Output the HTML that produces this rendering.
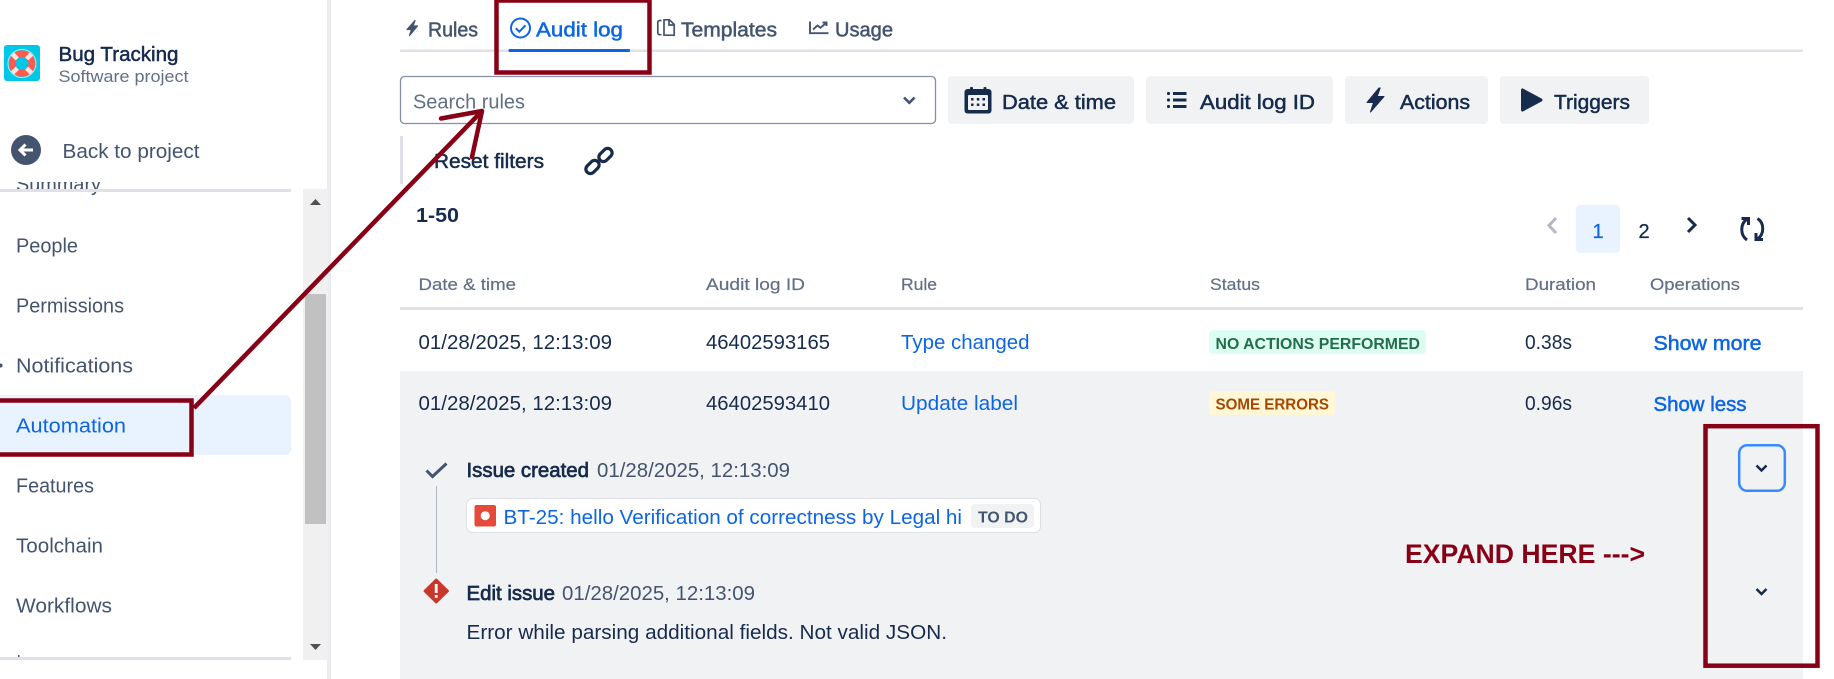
<!DOCTYPE html>
<html lang="en">
<head>
<meta charset="utf-8">
<title>Audit log</title>
<style>
html,body{margin:0;padding:0;background:#fff;width:1834px;height:679px;overflow:hidden}
svg{display:block}
text{font-family:"Liberation Sans",Arial,sans-serif;font-size:20px;white-space:pre}
.nav{fill:#44546f}
.d{fill:#172b4d}
.b{fill:#0c66e4}
.g{fill:#44546f}
.th{fill:#626f86;font-size:17px;stroke:#626f86;stroke-width:.2px}
.m{stroke-width:.5px;stroke:currentColor}
.s{stroke-width:.3px;stroke:currentColor}
</style>
</head>
<body>
<svg xmlns="http://www.w3.org/2000/svg" width="1834" height="679" viewBox="0 0 1834 679">
<defs><clipPath id="sc"><rect x="0" y="182" width="300" height="16"/></clipPath></defs>
<rect width="1834" height="679" fill="#fff"/>

<!-- sidebar -->
<rect x="327" y="0" width="4" height="679" fill="#ebecf0"/>
<rect x="4" y="45" width="36" height="36" rx="3" fill="#00c7e6"/>
<circle cx="22" cy="63.5" r="14" fill="none" stroke="#a8eef7" stroke-width="1"/>
<circle cx="22" cy="63.5" r="9.8" fill="none" stroke="#ff5a4f" stroke-width="6.6"/>
<g stroke="#ffe4df" stroke-width="4.5">
<path d="M26.7 58.8L31.4 54.1M17.3 58.8L12.6 54.1M26.7 68.2L31.4 72.9M17.3 68.2L12.6 72.9"/>
</g>
<text x="58.500" y="61" textLength="120" lengthAdjust="spacingAndGlyphs" class="d m" color="#172b4d">Bug Tracking</text>
<text x="58.500" y="82" textLength="130" lengthAdjust="spacingAndGlyphs" style="font-size:17px;fill:#626f86">Software project</text>
<circle cx="26" cy="150" r="15" fill="#44546f"/>
<path d="M33 150H20M25.5 144.5L20 150L25.5 155.5" fill="none" stroke="#fff" stroke-width="3"/>
<text x="62.500" y="158" textLength="137" lengthAdjust="spacingAndGlyphs" class="nav">Back to project</text>

<text x="16" y="191" textLength="85" lengthAdjust="spacingAndGlyphs" class="nav" clip-path="url(#sc)">Summary</text>
<rect x="0" y="189" width="291" height="3" fill="#dfe1e6"/>
<text x="16" y="252.500" textLength="62" lengthAdjust="spacingAndGlyphs" class="nav">People</text>
<text x="16" y="312.500" textLength="108" lengthAdjust="spacingAndGlyphs" class="nav">Permissions</text>
<circle cx="0.5" cy="365.5" r="2" fill="#44546f"/>
<text x="16" y="372.500" textLength="117" lengthAdjust="spacingAndGlyphs" class="nav">Notifications</text>
<rect x="-8" y="395" width="299" height="60" rx="6" fill="#e9f2ff"/>
<text x="16" y="432.500" textLength="110" lengthAdjust="spacingAndGlyphs" class="b">Automation</text>
<text x="16" y="492.500" textLength="78" lengthAdjust="spacingAndGlyphs" class="nav">Features</text>
<text x="16" y="552.500" textLength="87" lengthAdjust="spacingAndGlyphs" class="nav">Toolchain</text>
<text x="16" y="612.500" textLength="96" lengthAdjust="spacingAndGlyphs" class="nav">Workflows</text>
<rect x="18" y="655" width="1.5" height="2" fill="#44546f"/>
<rect x="0" y="657" width="291" height="3" fill="#dfe1e6"/>

<!-- scrollbar -->
<rect x="303" y="189" width="25" height="471" fill="#f0f0f0"/>
<rect x="305" y="294" width="21" height="230" fill="#c1c1c1"/>
<path d="M310 205L315.500 199L321 205Z" fill="#505050"/>
<path d="M310 644L315.500 650L321 644Z" fill="#505050"/>

<!-- tabs -->
<rect x="400" y="49.500" width="1403" height="2.500" fill="#dfe1e6"/>
<rect x="508.500" y="49" width="121.500" height="3" rx="1" fill="#0c66e4"/>
<path d="M415 20.500L407 29.500H411.500L409.500 35.500L417.500 26H413Z" fill="#44546f" stroke="#44546f" stroke-width="1.200" stroke-linejoin="round"/>
<text x="428" y="36.500" textLength="50" lengthAdjust="spacingAndGlyphs" class="g m" color="#44546f">Rules</text>
<circle cx="520.500" cy="28" r="9.500" fill="none" stroke="#0c66e4" stroke-width="2"/>
<path d="M515.800 28.200L519.300 31.700L525.500 25.300" fill="none" stroke="#0c66e4" stroke-width="2"/>
<text x="536" y="36.500" textLength="87" lengthAdjust="spacingAndGlyphs" class="b m" color="#0c66e4">Audit log</text>
<path d="M664 19.800H669.500L674.200 24.500V35.200H664ZM669 20V25H674" fill="none" stroke="#44546f" stroke-width="1.700"/>
<path d="M661.500 20.500H660Q657.800 20.500 657.800 22.700V32.500Q657.800 34.700 660 34.700H661.500" fill="none" stroke="#44546f" stroke-width="1.700"/>
<text x="681" y="36.500" textLength="96" lengthAdjust="spacingAndGlyphs" class="g m" color="#44546f">Templates</text>
<path d="M810 21.500V33.200H828.500" fill="none" stroke="#44546f" stroke-width="1.900"/>
<path d="M813 29.500L817.500 25.500L820.500 27.800L826 23M822.500 22.500H826.500V26" fill="none" stroke="#44546f" stroke-width="1.900"/>
<text x="835" y="36.500" textLength="58" lengthAdjust="spacingAndGlyphs" class="g m" color="#44546f">Usage</text>

<!-- search -->
<rect x="400.500" y="76.500" width="535" height="47" rx="4" fill="#fff" stroke="#8590a2" stroke-width="1.300"/>
<text x="413" y="108.500" textLength="112" lengthAdjust="spacingAndGlyphs" style="fill:#626f86">Search rules</text>
<path d="M904 97.500L909.300 102.800L914.600 97.500" fill="none" stroke="#44546f" stroke-width="2.600"/>

<!-- filter buttons -->
<rect x="948" y="76" width="186" height="48" rx="4" fill="#f1f2f4"/>
<rect x="1146" y="76" width="187" height="48" rx="4" fill="#f1f2f4"/>
<rect x="1345" y="76" width="143" height="48" rx="4" fill="#f1f2f4"/>
<rect x="1500" y="76" width="149" height="48" rx="4" fill="#f1f2f4"/>
<rect x="964.500" y="89" width="27" height="24.500" rx="3" fill="#172b4d"/>
<rect x="970" y="87" width="3" height="5" rx="1" fill="#172b4d"/>
<rect x="983.500" y="87" width="3" height="5" rx="1" fill="#172b4d"/>
<rect x="968" y="95" width="20" height="15" rx="1" fill="#f1f2f4"/>
<g fill="#172b4d"><rect x="971" y="98" width="2.500" height="2.500"/><rect x="976.800" y="98" width="2.500" height="2.500"/><rect x="982.500" y="98" width="2.500" height="2.500"/><rect x="971" y="103.500" width="2.500" height="2.500"/><rect x="976.800" y="103.500" width="2.500" height="2.500"/><rect x="982.500" y="103.500" width="2.500" height="2.500"/></g>
<text x="1002" y="109" textLength="114" lengthAdjust="spacingAndGlyphs" class="d m" color="#172b4d">Date &amp; time</text>
<g fill="#172b4d"><rect x="1167" y="92" width="3" height="3" rx="1"/><rect x="1167" y="98.500" width="3" height="3" rx="1"/><rect x="1167" y="105" width="3" height="3" rx="1"/><rect x="1173" y="92" width="13.500" height="3"/><rect x="1173" y="98.500" width="13.500" height="3"/><rect x="1173" y="105" width="13.500" height="3"/></g>
<text x="1200" y="109" textLength="115" lengthAdjust="spacingAndGlyphs" class="d m" color="#172b4d">Audit log ID</text>
<path d="M1379 88L1367 102.500H1373.500L1370.500 112L1384 96.500H1377.200L1380.200 88Z" fill="#172b4d" stroke="#172b4d" stroke-width="1" stroke-linejoin="round"/>
<text x="1400" y="109" textLength="70" lengthAdjust="spacingAndGlyphs" class="d m" color="#172b4d">Actions</text>
<path d="M1522.500 90V110L1541 100Z" fill="#172b4d" stroke="#172b4d" stroke-width="3" stroke-linejoin="round"/>
<text x="1554" y="109" textLength="76" lengthAdjust="spacingAndGlyphs" class="d m" color="#172b4d">Triggers</text>

<!-- reset -->
<rect x="400" y="136" width="3" height="48" fill="#dfe1e6"/>
<text x="434" y="168" textLength="110" lengthAdjust="spacingAndGlyphs" class="d m" color="#172b4d">Reset filters</text>
<g fill="none" stroke="#172b4d" stroke-width="3.200">
<rect x="585" y="162.500" width="15" height="9" rx="4.500" transform="rotate(-45 592.500 167)"/>
<rect x="598" y="150.500" width="15" height="9" rx="4.500" transform="rotate(-45 605.500 155)"/>
</g>
<text x="416" y="222" textLength="43" lengthAdjust="spacingAndGlyphs" style="font-weight:bold;fill:#172b4d">1-50</text>

<!-- pager -->
<path d="M1556 218L1549 225.500L1556 233" fill="none" stroke="#b3b9c4" stroke-width="3"/>
<rect x="1576" y="205" width="44" height="48" rx="4" fill="#e9f2ff"/>
<text x="1598" y="238" text-anchor="middle" class="b s" color="#0c66e4">1</text>
<text x="1644" y="238" text-anchor="middle" class="d s" color="#172b4d">2</text>
<path d="M1688 218L1695 225L1688 232" fill="none" stroke="#172b4d" stroke-width="3"/>
<g fill="none" stroke="#172b4d" stroke-width="3">
<path d="M1747 240C1740 235 1740 224 1747 219M1741.500 218.500H1748.500V225"/>
<path d="M1757.500 218.500C1764.500 223 1764.500 234 1757.500 239M1763 239.500H1756V233"/>
</g>

<!-- table head -->
<text x="418.500" y="290" textLength="97.500" lengthAdjust="spacingAndGlyphs" class="th">Date &amp; time</text>
<text x="706" y="290" textLength="99" lengthAdjust="spacingAndGlyphs" class="th">Audit log ID</text>
<text x="901" y="290" textLength="36" lengthAdjust="spacingAndGlyphs" class="th">Rule</text>
<text x="1210" y="290" textLength="50" lengthAdjust="spacingAndGlyphs" class="th">Status</text>
<text x="1525" y="290" textLength="71" lengthAdjust="spacingAndGlyphs" class="th">Duration</text>
<text x="1650" y="290" textLength="90" lengthAdjust="spacingAndGlyphs" class="th">Operations</text>
<rect x="400" y="307" width="1403" height="3" fill="#dfe1e6"/>

<!-- row 1 -->
<text x="418.500" y="349" textLength="193.500" lengthAdjust="spacingAndGlyphs" class="d">01/28/2025, 12:13:09</text>
<text x="706" y="349" textLength="124" lengthAdjust="spacingAndGlyphs" class="d">46402593165</text>
<text x="901" y="349" textLength="128.500" lengthAdjust="spacingAndGlyphs" class="b">Type changed</text>
<rect x="1209" y="330" width="217" height="24" rx="4" fill="#dcfff1"/>
<text x="1215.500" y="349" textLength="204.500" lengthAdjust="spacingAndGlyphs" style="font-size:16px;font-weight:bold;fill:#216e4e">NO ACTIONS PERFORMED</text>
<text x="1525" y="349" textLength="47" lengthAdjust="spacingAndGlyphs" class="d">0.38s</text>
<text x="1653.500" y="350" textLength="108" lengthAdjust="spacingAndGlyphs" class="b m" color="#0c66e4">Show more</text>

<!-- row 2 -->
<rect x="400" y="371" width="1403" height="308" fill="#f1f2f4"/>
<text x="418.500" y="410" textLength="193.500" lengthAdjust="spacingAndGlyphs" class="d">01/28/2025, 12:13:09</text>
<text x="706" y="410" textLength="124" lengthAdjust="spacingAndGlyphs" class="d">46402593410</text>
<text x="901" y="410" textLength="117" lengthAdjust="spacingAndGlyphs" class="b">Update label</text>
<rect x="1209" y="391" width="126" height="24" rx="4" fill="#fff7d6"/>
<text x="1215.500" y="409.500" textLength="113.500" lengthAdjust="spacingAndGlyphs" style="font-size:16px;font-weight:bold;fill:#a54800">SOME ERRORS</text>
<text x="1525" y="410" textLength="47" lengthAdjust="spacingAndGlyphs" class="d">0.96s</text>
<text x="1653.500" y="411" textLength="93" lengthAdjust="spacingAndGlyphs" class="b m" color="#0c66e4">Show less</text>

<!-- timeline -->
<path d="M426.500 470.500L432.500 476.500L446.500 463.500" fill="none" stroke="#44546f" stroke-width="3"/>
<text x="466.500" y="477" textLength="122.500" lengthAdjust="spacingAndGlyphs" class="d" style="stroke:#172b4d;stroke-width:.7px">Issue created</text>
<text x="597" y="477" textLength="193" lengthAdjust="spacingAndGlyphs" class="g">01/28/2025, 12:13:09</text>
<rect x="436" y="486" width="1" height="87" fill="#b3b9c4"/>
<rect x="466.500" y="498.500" width="574" height="34" rx="6" fill="#fff" stroke="#dcdfe4"/>
<rect x="474.500" y="505" width="21.500" height="21.500" rx="2" fill="#e5493a"/>
<circle cx="485.200" cy="515.700" r="4.500" fill="#fff"/>
<text x="503.500" y="524" textLength="458.500" lengthAdjust="spacingAndGlyphs" class="b">BT-25: hello Verification of correctness by Legal hi</text>
<rect x="971" y="504" width="63" height="24" rx="4" fill="#f1f2f4"/>
<text x="978" y="522.500" textLength="50" lengthAdjust="spacingAndGlyphs" style="font-size:16px;font-weight:bold;fill:#44546f">TO DO</text>
<path d="M436.200 579.500L448 591L436.200 602.500L424.500 591Z" fill="#c9372c" stroke="#c9372c" stroke-width="2" stroke-linejoin="round"/>
<rect x="434.800" y="584" width="2.800" height="9" fill="#fff"/>
<rect x="434.800" y="595" width="2.800" height="2.800" fill="#fff"/>
<text x="466.500" y="600" textLength="88.500" lengthAdjust="spacingAndGlyphs" class="d" style="stroke:#172b4d;stroke-width:.7px">Edit issue</text>
<text x="562" y="600" textLength="193" lengthAdjust="spacingAndGlyphs" class="g">01/28/2025, 12:13:09</text>
<text x="466.500" y="639" textLength="480.500" lengthAdjust="spacingAndGlyphs" class="d">Error while parsing additional fields. Not valid JSON.</text>

<!-- expand controls -->
<rect x="1739.200" y="445.200" width="45.600" height="45.600" rx="8" fill="none" stroke="#388bff" stroke-width="2.500"/>
<path d="M1756.500 465.500L1761.500 470.500L1766.500 465.500" fill="none" stroke="#172b4d" stroke-width="2.500"/>
<path d="M1756.500 589L1761.500 594L1766.500 589" fill="none" stroke="#172b4d" stroke-width="2.500"/>

<!-- annotations -->
<text x="1405" y="563" textLength="240" lengthAdjust="spacingAndGlyphs" style="font-size:27px;font-weight:bold;fill:#880015">EXPAND HERE ---&gt;</text>
<g fill="none" stroke="#880015">
<rect x="496.500" y="0.500" width="153" height="72" stroke-width="4.500"/>
<rect x="-5" y="400.500" width="196.500" height="54" stroke-width="4.500"/>
<rect x="1705.500" y="426.200" width="112" height="239.500" stroke-width="4.500"/>
<path d="M194 408L482 111" stroke-width="4.500"/>
<path d="M482 111L441 118.500M482 111L472 157" stroke-width="4.500" stroke-linecap="round"/>
</g>
</svg>
</body>
</html>
